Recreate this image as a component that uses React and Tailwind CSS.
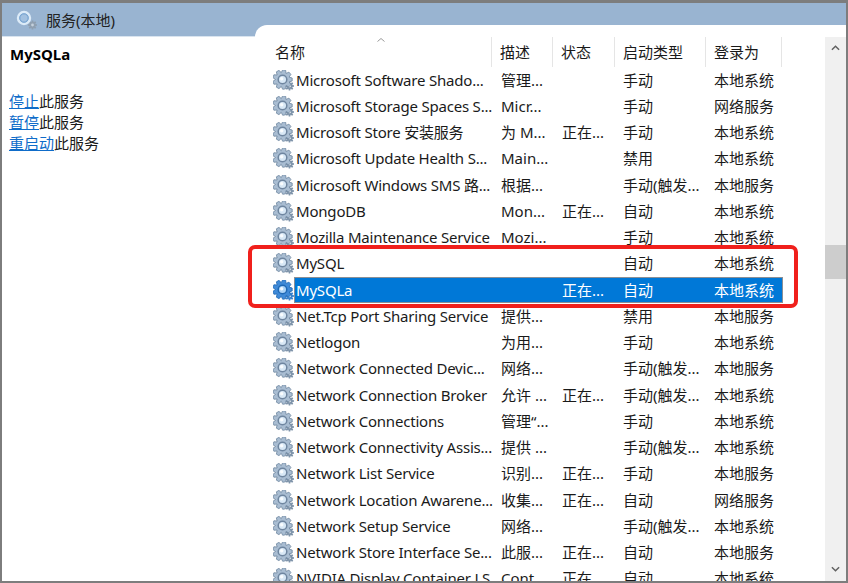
const services = [
  ["Microsoft Software Shado...", "管理...", "", "手动", "本地系统"],
  ["Microsoft Storage Spaces S...", "Micr...", "", "手动", "网络服务"],
  ["Microsoft Store 安装服务", "为 M...", "正在...", "手动", "本地系统"],
  ["Microsoft Update Health S...", "Main...", "", "禁用", "本地系统"],
  ["Microsoft Windows SMS 路...", "根据...", "", "手动(触发...", "本地服务"],
  ["MongoDB", "Mon...", "正在...", "自动", "本地系统"],
  ["Mozilla Maintenance Service", "Mozi...", "", "手动", "本地系统"],
  ["MySQL", "", "", "自动", "本地系统"],
  ["MySQLa", "", "正在...", "自动", "本地系统"],
  ["Net.Tcp Port Sharing Service", "提供...", "", "禁用", "本地服务"],
  ["Netlogon", "为用...", "", "手动", "本地系统"],
  ["Network Connected Devic...", "网络...", "", "手动(触发...", "本地服务"],
  ["Network Connection Broker", "允许 ...", "正在...", "手动(触发...", "本地系统"],
  ["Network Connections", "管理“...", "", "手动", "本地系统"],
  ["Network Connectivity Assis...", "提供 ...", "", "手动(触发...", "本地系统"],
  ["Network List Service", "识别...", "正在...", "手动", "本地服务"],
  ["Network Location Awarene...", "收集...", "正在...", "自动", "网络服务"],
  ["Network Setup Service", "网络...", "", "手动(触发...", "本地系统"],
  ["Network Store Interface Se...", "此服...", "正在...", "自动", "本地服务"],
  ["NVIDIA Display Container LS", "Cont...", "正在", "自动", "本地系统"],
];

const fontClass = "font-['Noto_Sans','Noto_Sans_CJK_SC',sans-serif]";

// toothed outline for the gear icon
function gearPath(cx, cy, outer, inner, teeth) {
  const step = (Math.PI * 2) / teeth;
  let d = "";
  for (let i = 0; i < teeth; i++) {
    const a = i * step;
    const pts = [
      [inner, a - step * 0.5],
      [outer, a - step * 0.22],
      [outer, a + step * 0.22],
    ];
    pts.forEach(([r, t], j) => {
      const x = (cx + r * Math.cos(t)).toFixed(2);
      const y = (cy + r * Math.sin(t)).toFixed(2);
      d += `${i === 0 && j === 0 ? "M" : "L"}${x} ${y}`;
    });
  }
  return d + "Z";
}

const bigGear = gearPath(9.5, 9.5, 9.8, 7, 9);
const smallGear = gearPath(16.5, 16, 4.6, 2.9, 8);

function GearIcon({ active, className }) {
  const edge = active ? "#1f68b4" : "#6f86a0";
  const body = active ? "#3f8ad8" : "#a9bdd2";
  const hole = active ? "#a9d2f7" : "#d8e8f6";
  const small = active ? "#3a82cc" : "#7f94aa";
  return (
    <svg viewBox="0 0 21 21" className={className}>
      <path d={smallGear} fill={small} />
      <circle cx="16.5" cy="16" r="1.3" fill="#ffffff" />
      <path d={bigGear} fill={body} stroke={edge} strokeWidth="0.8" />
      <circle cx="9.5" cy="9.5" r="4.3" fill={hole} stroke={edge} strokeWidth="1.5" />
      <circle cx="8.7" cy="8.7" r="1.7" fill="#ffffff" opacity="0.85" />
    </svg>
  );
}

// washed out version used on the title band
function BandIcon({ className }) {
  return (
    <svg viewBox="0 0 21 21" className={className}>
      <path d={smallGear} fill="#8f9fb0" />
      <circle cx="16.5" cy="16" r="1.4" fill="#c4d0dc" />
      <circle cx="8" cy="9" r="6" fill="#a3c1e0" stroke="#dcebf8" strokeWidth="2.4" />
      <circle cx="8" cy="9" r="4.2" fill="none" stroke="#6f9fce" strokeWidth="1" />
    </svg>
  );
}

function ServiceRow({ row, selected }) {
  const [name, desc, status, startup, login] = row;
  return (
    <div className="flex h-[26.25px] shrink-0 items-center text-[15px] leading-none whitespace-nowrap">
      <GearIcon active={selected} className="ml-[18px] h-[21px] w-[21px] shrink-0" />
      <div
        className={`flex h-[26px] w-[489px] shrink-0 items-center ${
          selected ? "border border-[#8a8f96] bg-[#0078d7] text-white" : "border border-transparent"
        }`}
      >
        <span className="w-[206px] shrink-0 pl-px tracking-[-0.2px]">{name}</span>
        <span className="w-[61px] shrink-0">{desc}</span>
        <span className="w-[61px] shrink-0">{status}</span>
        <span className="w-[91px] shrink-0">{startup}</span>
        <span>{login}</span>
      </div>
    </div>
  );
}

function HeaderCell({ className, children }) {
  return (
    <div className={`flex h-[30px] shrink-0 items-center border-r border-[#e5e5e5] pl-[8px] ${className}`}>
      {children}
    </div>
  );
}

export default function App() {
  return (
    <div className={`flex h-[583px] w-[848px] flex-col overflow-hidden border-2 border-t-[3px] border-[#7d7d7d] bg-white text-[#1a1a1a] ${fontClass}`}>
      {/* Title band */}
      <div className="flex h-[34px] shrink-0 items-center border-b border-[#d9e4ef] bg-[#99b4d1] pl-[14px] text-[15px] text-[#222]">
        <BandIcon className="mr-[9px] h-[21px] w-[21px]" />
        <span className="mt-px">服务(本地)</span>
      </div>

      <div className="flex min-h-0 flex-1">
        {/* Action pane */}
        <div className="w-[253px] shrink-0 pl-[8px] pt-[4px] text-[15px]">
          <div className="h-[26px] font-bold leading-[26px] text-black">MySQLa</div>
          <div className="-ml-px mt-[24px] leading-[21px]">
            <div><a className="text-[#0f6cc9] underline">停止</a>此服务</div>
            <div><a className="text-[#0f6cc9] underline">暂停</a>此服务</div>
            <div><a className="text-[#0f6cc9] underline">重启动</a>此服务</div>
          </div>
        </div>

        {/* Service list */}
        <div className="relative z-10 -mt-[12px] flex min-w-0 flex-1 rounded-tl-[12px] bg-white pt-[12px]">
          <div className="min-w-0 flex-1 overflow-hidden">
            <div className="flex text-[15px]">
              <HeaderCell className="relative w-[237px] pl-[20px]">
                名称
                <svg viewBox="0 0 8 4" className="absolute left-[122px] top-[1px] h-[4px] w-[8px]">
                  <path d="M0.5 3.5 4 0.5 7.5 3.5" fill="none" stroke="#9a9a9a" />
                </svg>
              </HeaderCell>
              <HeaderCell className="w-[61px]">描述</HeaderCell>
              <HeaderCell className="w-[62px]">状态</HeaderCell>
              <HeaderCell className="w-[91px]">启动类型</HeaderCell>
              <HeaderCell className="w-[76px]">登录为</HeaderCell>
            </div>
            {services.map((row) => (
              <ServiceRow key={row[0]} row={row} selected={row[0] === "MySQLa"} />
            ))}
          </div>

          {/* Scrollbar */}
          <div className="flex w-[21px] shrink-0 flex-col items-center bg-[#f0f0f0]">
            <svg viewBox="0 0 10 6" className="mt-[8px] h-[6px] w-[9px]">
              <path d="M1 5 5 1 9 5" fill="none" stroke="#606060" strokeWidth="1.6" />
            </svg>
            <div className="mt-[194px] h-[34px] w-full bg-[#cdcdcd]" />
            <svg viewBox="0 0 10 6" className="mt-[287px] h-[6px] w-[9px]">
              <path d="M1 1 5 5 9 1" fill="none" stroke="#606060" strokeWidth="1.6" />
            </svg>
          </div>

          {/* red annotation around the two rows */}
          <div className="absolute left-[-7px] top-[220px] h-[63px] w-[550px] rounded-[7px] border-4 border-[#f0201c]" />
        </div>
      </div>
    </div>
  );
}
